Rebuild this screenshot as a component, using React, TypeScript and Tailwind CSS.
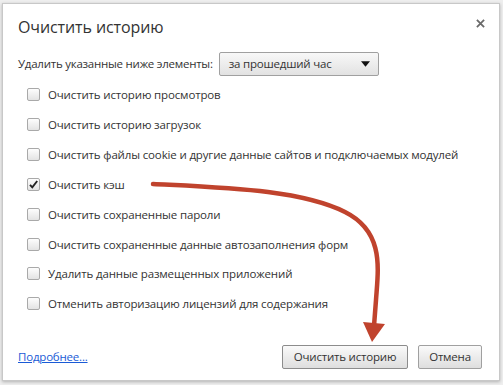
import React from "react";

const items: { label: string; checked?: boolean }[] = [
  { label: "Очистить историю просмотров" },
  { label: "Очистить историю загрузок" },
  { label: "Очистить файлы cookie и другие данные сайтов и подключаемых модулей" },
  { label: "Очистить кэш", checked: true },
  { label: "Очистить сохраненные пароли" },
  { label: "Очистить сохраненные данные автозаполнения форм" },
  { label: "Удалить данные размещенных приложений" },
  { label: "Отменить авторизацию лицензий для содержания" },
];

function Checkbox({ checked }: { checked?: boolean }) {
  return (
    <div className="w-[13px] h-[13px] rounded-[2px] border border-[#a9a9a9] bg-gradient-to-b from-[#fdfdfd] to-[#e3e3e3] relative shrink-0">
      {checked && (
        <svg viewBox="0 0 13 13" className="absolute -left-[1px] -top-[1px] w-[13px] h-[13px]">
          <path d="M3 6.8 L5.3 9.3 L10.2 3" fill="none" stroke="#222" strokeWidth="1.9" />
        </svg>
      )}
    </div>
  );
}

export default function App() {
  return (
    <div
      className="w-[503px] h-[385px] bg-[#eeeeee] pl-[2px] pt-[3px] relative overflow-hidden"
      style={{ fontFamily: '"Open Sans", "Noto Sans", sans-serif' }}
    >
      <div className="w-[498px] h-[378px] bg-white border border-[#c8c8c8] shadow-[0_1px_3px_rgba(0,0,0,0.25)] relative flex flex-col pl-[15px] pr-[14px]">
        <div className="flex items-start justify-between pt-[13px] h-[48px]">
          <div className="text-[16px] text-[#333] leading-[20px] tracking-[-0.1px]">Очистить историю</div>
          <svg viewBox="0 0 10 10" className="w-[9px] h-[9px] mt-[2px]">
            <path d="M1 1 L9 9 M9 1 L1 9" stroke="#6a6a6a" strokeWidth="2" />
          </svg>
        </div>
        <div className="flex items-center h-[24px] text-[11.5px] text-[#333]">
          <span className="tracking-[-0.25px]">Удалить указанные ниже элементы:</span>
          <div className="ml-[6px] w-[160px] h-[24px] border border-[#a0a0a0] rounded-[2px] bg-gradient-to-b from-[#f8f8f8] to-[#e2e2e2] flex items-center justify-between pl-[9px] pr-[8px]">
            <span className="tracking-[-0.2px]">за прошедший час</span>
            <svg viewBox="0 0 10 6" className="w-[9px] h-[6px]">
              <path d="M0 0 L10 0 L5 6 Z" fill="#111" />
            </svg>
          </div>
        </div>
        <div className="flex flex-col pl-[9px] mt-[4px]">
          {items.map((it) => (
            <div key={it.label} className="flex items-center h-[29.85px] gap-[8px] text-[11.5px] text-[#333]">
              <Checkbox checked={it.checked} />
              <span className="tracking-[-0.15px] whitespace-nowrap">{it.label}</span>
            </div>
          ))}
        </div>
        <div className="flex-1" />
        <div className="flex items-center justify-between pb-[11px] pr-[3px]">
          <a className="text-[11.5px] text-[#1a5bd6] underline tracking-[-0.2px]">Подробнее...</a>
          <div className="flex gap-[10px]">
            <button className="h-[24px] w-[126px] whitespace-nowrap border border-[#8c8c8c] rounded-[2px] bg-gradient-to-b from-[#fafafa] to-[#dedede] text-[11.5px] text-[#333] tracking-[-0.2px]">
              Очистить историю
            </button>
            <button className="h-[24px] w-[64px] whitespace-nowrap border border-[#a0a0a0] rounded-[2px] bg-gradient-to-b from-[#fafafa] to-[#dedede] text-[11.5px] text-[#333] tracking-[-0.2px]">
              Отмена
            </button>
          </div>
        </div>
      </div>
      <svg className="absolute left-0 top-0 pointer-events-none" width="503" height="385" viewBox="0 0 503 385">
        <path
          d="M153 184 C 230 188, 300 190, 345 212 C 385 232, 378 270, 376 300 L 374 326"
          fill="none"
          stroke="#c0432d"
          strokeWidth="4.5"
          strokeLinecap="round"
        />
        <path d="M363 322 L 385 324 L 372 342 Z" fill="#c0432d" />
      </svg>
    </div>
  );
}
